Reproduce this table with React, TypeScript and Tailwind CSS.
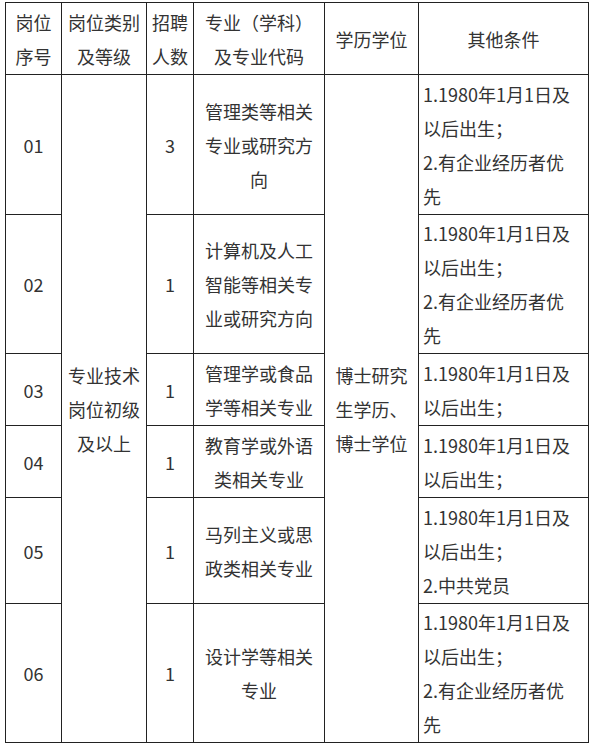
import React from "react";

const L = ({ lines }: { lines: string[] }) => (
  <>
    {lines.map((l, i) => (
      <div key={i} className="whitespace-nowrap">
        {l}
      </div>
    ))}
  </>
);

const cell = "border border-[#222] align-middle px-[4px] text-center";
const cellL = "border border-[#222] align-middle px-[4px] text-left";

const c1 = ["1.1980年1月1日及", "以后出生；", "2.有企业经历者优", "先"];
const c2 = ["1.1980年1月1日及", "以后出生；"];

export default function App() {
  return (
    <div
      className="bg-white w-[594px] h-[745px] pl-[5px] pt-[2px] text-[#333] text-[18px] leading-[34px]"
      style={{ fontFamily: '"Noto Sans CJK SC", "Noto Sans", sans-serif' }}
    >
      <table className="table-fixed border-collapse w-[583px]">
        <colgroup>
          <col className="w-[56px]" />
          <col className="w-[85px]" />
          <col className="w-[47px]" />
          <col className="w-[131px]" />
          <col className="w-[94px]" />
          <col className="w-[170px]" />
        </colgroup>
        <tbody>
          <tr className="h-[72px]">
            <td className={cell}><L lines={["岗位", "序号"]} /></td>
            <td className={cell}><L lines={["岗位类别", "及等级"]} /></td>
            <td className={cell}><L lines={["招聘", "人数"]} /></td>
            <td className={cell}><L lines={["专业（学科）", "及专业代码"]} /></td>
            <td className={cell}><L lines={["学历学位"]} /></td>
            <td className={cell}><L lines={["其他条件"]} /></td>
          </tr>
          <tr className="h-[140px]">
            <td className={cell}>01</td>
            <td className={cell} rowSpan={6}>
              <L lines={["专业技术", "岗位初级", "及以上"]} />
            </td>
            <td className={cell}>3</td>
            <td className={cell}><L lines={["管理类等相关", "专业或研究方", "向"]} /></td>
            <td className={cell} rowSpan={6}>
              <L lines={["博士研究", "生学历、", "博士学位"]} />
            </td>
            <td className={cellL}><L lines={c1} /></td>
          </tr>
          <tr className="h-[139px]">
            <td className={cell}>02</td>
            <td className={cell}>1</td>
            <td className={cell}><L lines={["计算机及人工", "智能等相关专", "业或研究方向"]} /></td>
            <td className={cellL}><L lines={c1} /></td>
          </tr>
          <tr className="h-[72px]">
            <td className={cell}>03</td>
            <td className={cell}>1</td>
            <td className={cell}><L lines={["管理学或食品", "学等相关专业"]} /></td>
            <td className={cellL}><L lines={c2} /></td>
          </tr>
          <tr className="h-[72px]">
            <td className={cell}>04</td>
            <td className={cell}>1</td>
            <td className={cell}><L lines={["教育学或外语", "类相关专业"]} /></td>
            <td className={cellL}><L lines={c2} /></td>
          </tr>
          <tr className="h-[106px]">
            <td className={cell}>05</td>
            <td className={cell}>1</td>
            <td className={cell}><L lines={["马列主义或思", "政类相关专业"]} /></td>
            <td className={cellL}><L lines={["1.1980年1月1日及", "以后出生；", "2.中共党员"]} /></td>
          </tr>
          <tr className="h-[139px]">
            <td className={cell}>06</td>
            <td className={cell}>1</td>
            <td className={cell}><L lines={["设计学等相关", "专业"]} /></td>
            <td className={cellL}><L lines={c1} /></td>
          </tr>
        </tbody>
      </table>
    </div>
  );
}
